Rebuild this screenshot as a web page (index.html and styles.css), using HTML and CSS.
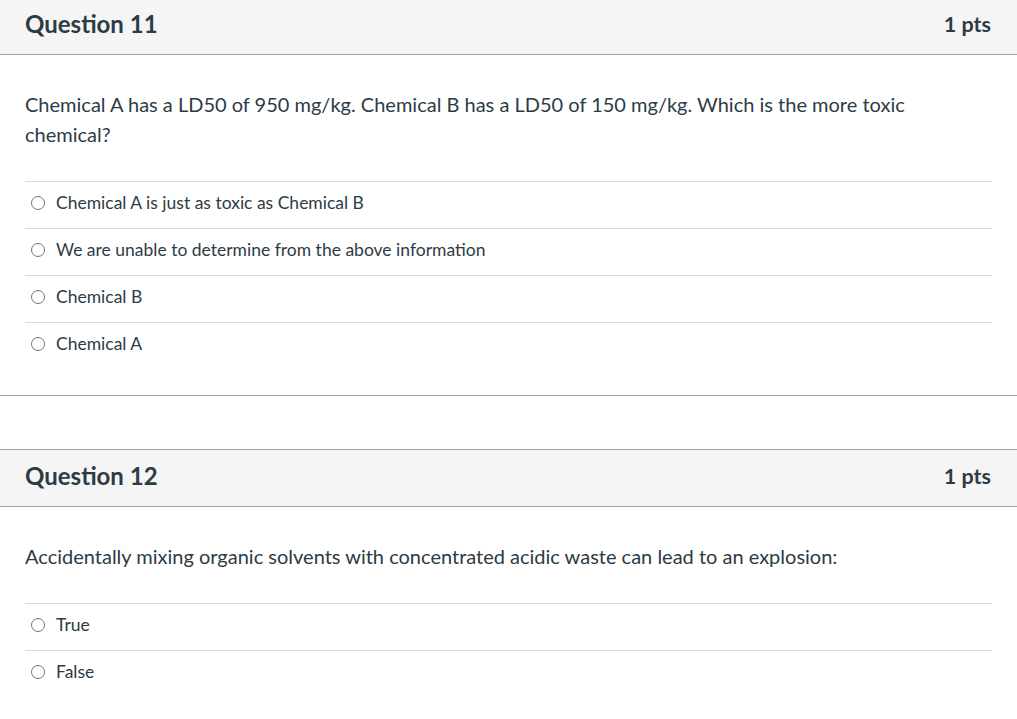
FILE: index.html
```html
<!DOCTYPE html>
<html>
<head>
<meta charset="utf-8">
<link rel="stylesheet" href="styles.css">
</head>
<body>
<div class="quiz">
  <div class="question">
    <div class="header">
      <span class="title">Question 11</span>
      <span class="pts">1 pts</span>
    </div>
    <div class="text">Chemical A has a LD50 of 950 mg/kg. Chemical B has a LD50 of 150 mg/kg. Which is the more toxic chemical?</div>
    <div class="answers">
      <label class="answer"><span class="radio"></span><span>Chemical A is just as toxic as Chemical B</span></label>
      <label class="answer"><span class="radio"></span><span>We are unable to determine from the above information</span></label>
      <label class="answer"><span class="radio"></span><span>Chemical B</span></label>
      <label class="answer"><span class="radio"></span><span>Chemical A</span></label>
    </div>
  </div>
  <div class="question">
    <div class="header">
      <span class="title">Question 12</span>
      <span class="pts">1 pts</span>
    </div>
    <div class="text">Accidentally mixing organic solvents with concentrated acidic waste can lead to an explosion:</div>
    <div class="answers">
      <label class="answer"><span class="radio"></span><span>True</span></label>
      <label class="answer"><span class="radio"></span><span>False</span></label>
    </div>
  </div>
</div>
</body>
</html>
```
FILE: styles.css
```css
html, body {
  margin: 0;
  padding: 0;
  background: #fff;
}
body {
  font-family: Lato, "Open Sans", sans-serif;
  color: #2d3b45;
  overflow: hidden;
  height: 719px;
}
.quiz {
  margin-top: -3px;
}
.question {
  border-top: 1px solid #a5a5a5;
  border-bottom: 1px solid #a5a5a5;
  margin-bottom: 53px;
}
.header {
  display: flex;
  justify-content: space-between;
  align-items: center;
  height: 57px;
  box-sizing: border-box;
  padding: 0 26px 5px 25px;
  background: #f5f5f5;
  border-bottom: 1px solid #a5a5a5;
  font-weight: bold;
}
.title {
  font-size: 24px;
}
.pts {
  font-size: 21.5px;
}
.text {
  padding: 34px 26px 0 25px;
  font-size: 20px;
  line-height: 30px;
}
.answers {
  margin: 32px 25px 0 25px;
  padding-bottom: 26px;
}
.answer {
  display: flex;
  align-items: center;
  border-top: 1px solid #dcdcdc;
  padding: 9px 0 13px 6px;
  font-size: 17.5px;
  line-height: 24px;
}
.radio {
  width: 12px;
  height: 12px;
  border: 1.5px solid #737373;
  border-radius: 50%;
  margin-right: 11px;
  flex-shrink: 0;
}
```
